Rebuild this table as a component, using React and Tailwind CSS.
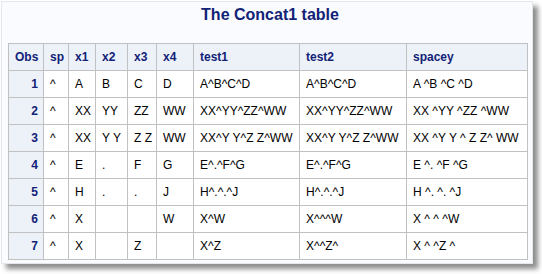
const columns = [
    { key: 'obs', label: 'Obs', width: 'w-[35px]' },
    { key: 'sp', label: 'sp', width: 'w-[25px]' },
    { key: 'x1', label: 'x1', width: 'w-[27px]' },
    { key: 'x2', label: 'x2', width: 'w-[32px]' },
    { key: 'x3', label: 'x3', width: 'w-[29px]' },
    { key: 'x4', label: 'x4', width: 'w-[37px]' },
    { key: 'test1', label: 'test1', width: 'w-[106px]' },
    { key: 'test2', label: 'test2', width: 'w-[107px]' },
    { key: 'spacey', label: 'spacey', width: 'w-[121px]' },
];

const rows = [
    ['^', 'A', 'B', 'C', 'D', 'A^B^C^D', 'A^B^C^D', 'A ^B ^C ^D'],
    ['^', 'XX', 'YY', 'ZZ', 'WW', 'XX^YY^ZZ^WW', 'XX^YY^ZZ^WW', 'XX ^YY ^ZZ ^WW'],
    ['^', 'XX', 'Y Y', 'Z Z', 'WW', 'XX^Y Y^Z Z^WW', 'XX^Y Y^Z Z^WW', 'XX ^Y Y ^ Z Z^ WW'],
    ['^', 'E', '.', 'F', 'G', 'E^.^F^G', 'E^.^F^G', 'E ^. ^F ^G'],
    ['^', 'H', '.', '.', 'J', 'H^.^.^J', 'H^.^.^J', 'H ^. ^. ^J'],
    ['^', 'X', '', '', 'W', 'X^W', 'X^^^W', 'X ^ ^ ^W'],
    ['^', 'X', '', 'Z', '', 'X^Z', 'X^^Z^', 'X ^ ^Z ^'],
];

export default function App() {
    return (
        <div className="w-[542px] h-[274px] bg-white pt-px pl-px font-['Liberation_Sans',Arial,sans-serif]">
            {/* Output card */}
            <div className="w-[532px] border border-[#e4e6ec] bg-[#fafbfe] pt-[3px] pl-[6px] pb-[3px] shadow-[5px_5px_5px_rgba(0,0,0,0.45)]">
                <h1 className="h-[20px] text-center text-[16px] leading-[20px] font-bold text-[#112277]">
                    The Concat1 table
                </h1>

                <table className="mt-[18px] w-[519px] table-fixed border-collapse border border-[#c1c1c1] text-[12px]">
                    <colgroup>
                        {columns.map((c) => (
                            <col key={c.key} className={c.width} />
                        ))}
                    </colgroup>
                    <thead>
                        <tr className="h-[27px] bg-[#edf2f9]">
                            {columns.map((c) => (
                                <th
                                    key={c.key}
                                    className="border border-[#c1c1c1] px-[6px] text-left font-bold text-[#112277]"
                                >
                                    {c.label}
                                </th>
                            ))}
                        </tr>
                    </thead>
                    <tbody>
                        {rows.map((r, i) => (
                            <tr key={i} className="h-[27px]">
                                <th className="border border-[#c1c1c1] bg-[#edf2f9] pr-[5px] text-right font-bold text-[#112277]">
                                    {i + 1}
                                </th>
                                {r.map((v, j) => (
                                    <td
                                        key={j}
                                        className="border border-[#c1c1c1] bg-white px-[6px] whitespace-pre text-black"
                                    >
                                        {v}
                                    </td>
                                ))}
                            </tr>
                        ))}
                    </tbody>
                </table>
            </div>
        </div>
    );
}
